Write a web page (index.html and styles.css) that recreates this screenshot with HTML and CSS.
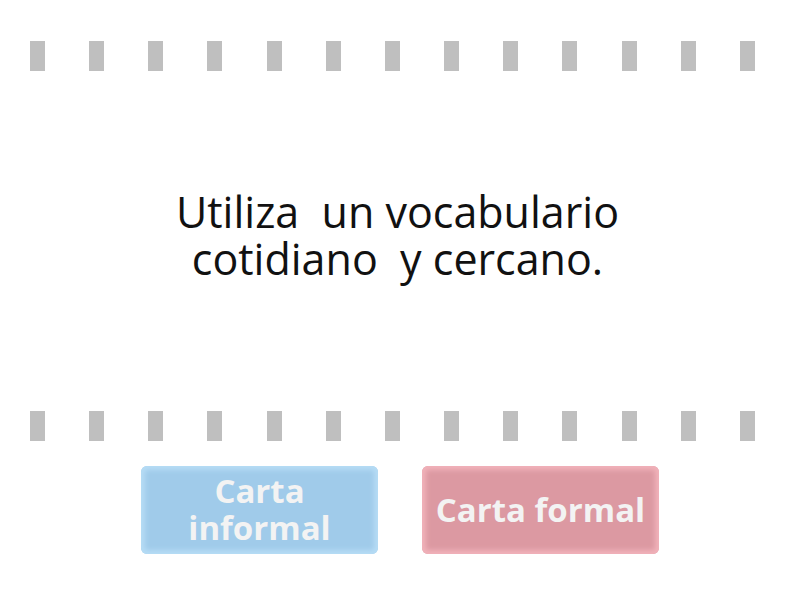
FILE: index.html
```html
<!DOCTYPE html>
<html lang="es">
<head>
  <meta charset="UTF-8">
  <title>Ordenar en grupos</title>
  <link rel="stylesheet" href="styles.css">
</head>
<body>

  <div class="dashes">
    <span></span><span></span><span></span><span></span><span></span>
    <span></span><span></span><span></span><span></span><span></span>
    <span></span><span></span><span></span>
  </div>

  <div class="card">
    <p>Utiliza&nbsp; un vocabulario<br>cotidiano&nbsp; y cercano.</p>
  </div>

  <div class="dashes">
    <span></span><span></span><span></span><span></span><span></span>
    <span></span><span></span><span></span><span></span><span></span>
    <span></span><span></span><span></span>
  </div>

  <div class="groups">
    <button class="group blue">Carta<br>informal</button>
    <button class="group red">Carta formal</button>
  </div>

</body>
</html>
```

FILE: styles.css
```css
body {
  margin: 0;
  background: #fff;
  font-family: "Open Sans", "Noto Sans", sans-serif;
  width: 800px;
  height: 600px;
  overflow: hidden;
}

/* dashed divider rows */
.dashes {
  display: flex;
  justify-content: space-between;
  padding: 0 45px 0 30px;
  height: 30px;
}

.dashes span {
  width: 15px;
  height: 30px;
  background: #bfbfbf;
}

.dashes:first-child {
  margin-top: 41px;
}

.card {
  height: 340px;
  display: flex;
  align-items: center;
  justify-content: center;
}

.card p {
  margin: 0 0 12px -5px;
  text-align: center;
  font-size: 43px;
  line-height: 47px;
  color: #111;
}

.groups {
  display: flex;
  justify-content: center;
  gap: 44px;
  margin-top: 25px;
}

.group {
  width: 237px;
  height: 88px;
  border: none;
  border-radius: 6px;
  font-family: inherit;
  font-weight: bold;
  font-size: 33px;
  line-height: 37px;
  color: #f3f3f3;
  padding: 0 4px 2px;
}

.blue {
  background: #a0cbea;
  box-shadow: inset 0 0 5px 4px #b6dcf5;
}

.red {
  background: #dc99a2;
  box-shadow: inset 0 0 5px 4px #f1b2ba;
}
```
